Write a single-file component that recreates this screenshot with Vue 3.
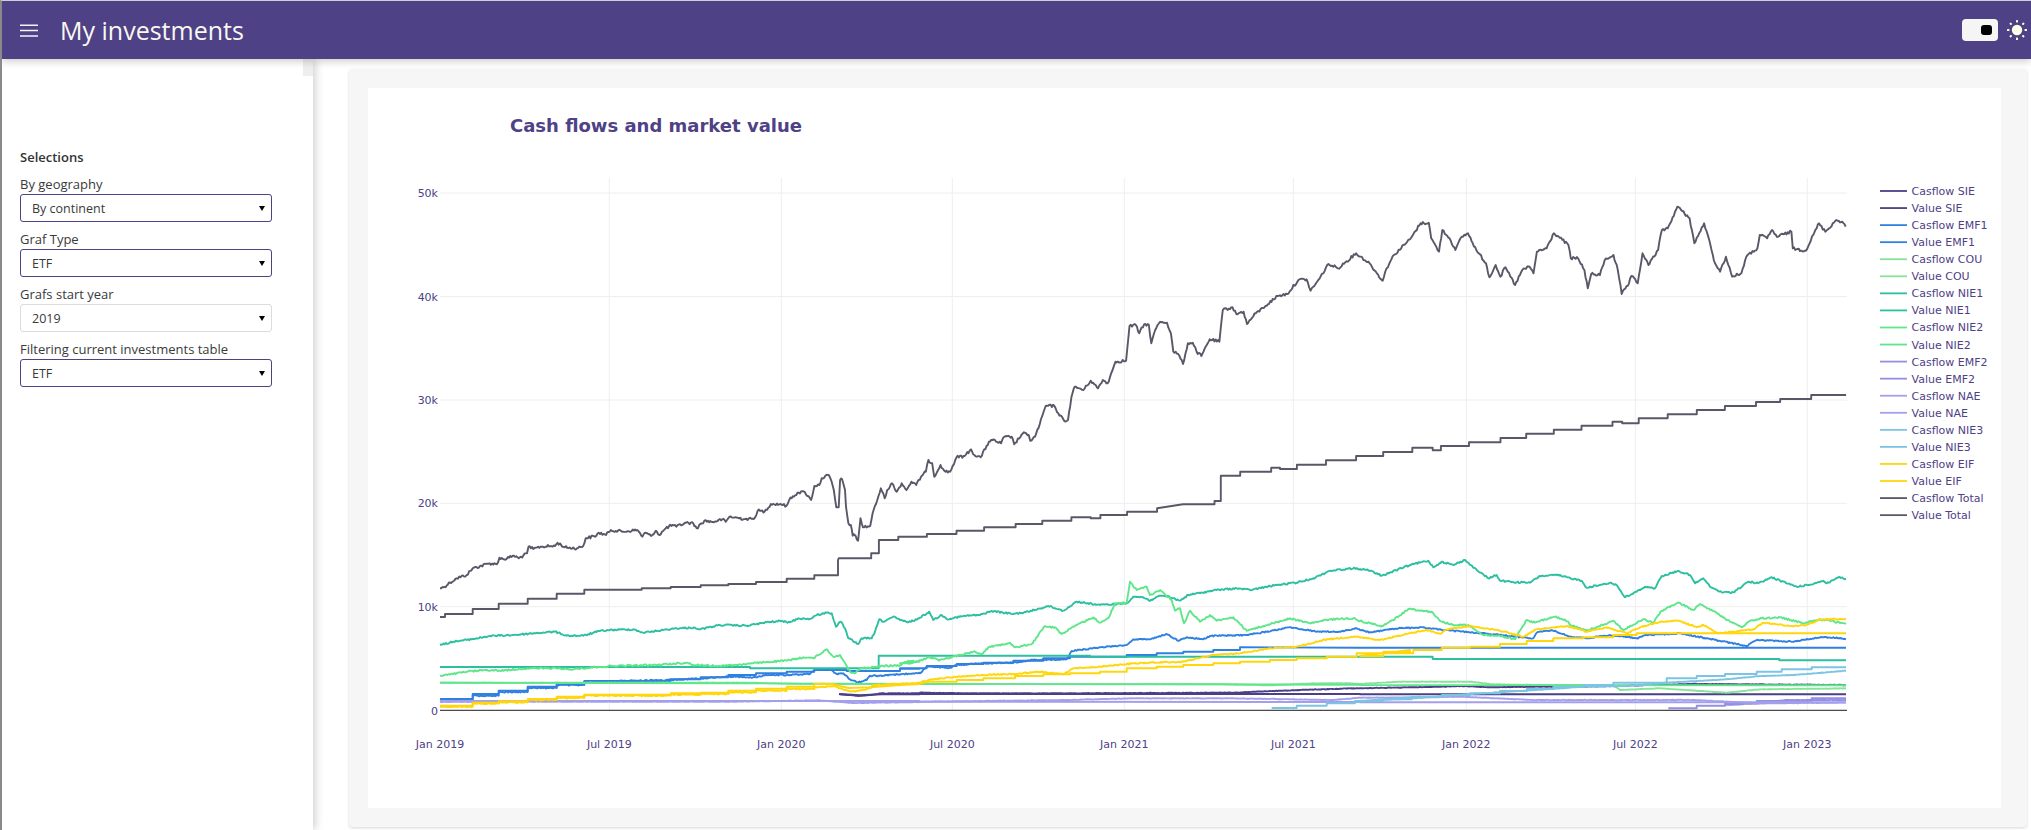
<script setup>
const C = { sie: '#4b3f87', emf1: '#2f80e0', cou: '#86e39a', nie1: '#2cbfa0', nie2: '#5fe68a', emf2: '#948fe2', nae: '#a49fec', nie3: '#7cc4e4', eif: '#ffd60a', total: '#5a5868' }

const z5 = (a) => a.map(([X, Y]) => [400 + X / 3, 560 + Y / 3])
const z6 = (a) => a.map(([X, Y]) => [900 + X / 3, 540 + Y / 3])
const z7 = (a) => a.map(([X, Y]) => [1360 + X / 3, 540 + Y / 3])
const z8 = (a) => a.map(([X, Y]) => [400 + X / 2.063, 170 + Y / 3])
const z9 = (a) => a.map(([X, Y]) => [1120 + X / 2.063, 170 + Y / 3])

// change-point list -> stair-step vertices
const step = (a) => {
  const out = [a[0]]
  for (let i = 1; i < a.length; i++) {
    out.push([a[i][0], a[i - 1][1]])
    out.push(a[i])
  }
  return out
}

let seed = 12345
const rnd = () => {
  seed = (seed * 1103515245 + 12345) & 0x7fffffff
  return seed / 0x7fffffff - 0.5
}
// adds the fine day-to-day jitter of a price series
const jag = (a, amp) => {
  const out = []
  for (let i = 0; i < a.length - 1; i++) {
    const [x0, y0] = a[i]
    const [x1, y1] = a[i + 1]
    const n = Math.max(1, Math.round((x1 - x0) / 1.2))
    for (let k = 0; k < n; k++) {
      const t = k / n
      out.push([x0 + (x1 - x0) * t, y0 + (y1 - y0) * t + (k ? rnd() * amp : 0)])
    }
  }
  out.push(a[a.length - 1])
  return out
}
const path = (a) => 'M' + a.map(([x, y]) => x.toFixed(1) + ' ' + y.toFixed(1)).join('L')

const valueTotal = jag([
  ...z5([[120, 85], [130, 82], [150, 68], [170, 55], [200, 45]]),
  ...z8([[150, 1195], [185, 1180], [200, 1183], [205, 1163], [215, 1168], [235, 1157], [245, 1165], [262, 1150], [265, 1130], [275, 1137], [290, 1130], [320, 1128], [325, 1118], [340, 1132], [365, 1135], [378, 1128], [383, 1105], [405, 1097], [410, 1088], [425, 1095], [435, 1080], [460, 1085], [490, 1080], [500, 1100], [505, 1088], [518, 1098], [528, 1082], [535, 1095], [548, 1075], [562, 1065], [570, 1070], [590, 1058], [605, 1060], [612, 1075], [628, 1052], [645, 1056], [665, 1048], [672, 1055], [680, 1040], [712, 1047], [730, 1047], [738, 1022], [752, 1025], [765, 1002], [785, 1002], [797, 1008], [803, 990], [820, 968], [835, 966], [848, 990], [855, 948], [865, 945], [870, 925], [883, 915], [888, 925], [895, 960], [900, 1012], [905, 1012], [908, 930], [912, 928], [918, 960], [920, 1010], [925, 1060], [930, 1065], [934, 1097], [938, 1095], [945, 1112], [950, 1045], [955, 1072], [970, 1068], [975, 1030], [982, 1002], [992, 955], [1000, 985], [1005, 960], [1015, 940], [1025, 965], [1035, 940], [1045, 960], [1055, 935], [1065, 945], [1075, 920], [1085, 905], [1090, 870], [1098, 880], [1102, 920], [1115, 885], [1125, 905], [1135, 905], [1148, 862], [1165, 858], [1178, 838], [1185, 855], [1198, 862], [1215, 815], [1222, 810], [1240, 820], [1245, 802], [1262, 800], [1267, 823], [1285, 790], [1297, 795], [1300, 812], [1310, 800], [1320, 762], [1332, 708], [1350, 708], [1358, 730], [1370, 752], [1378, 750], [1385, 682], [1392, 650], [1410, 660], [1425, 632], [1440, 655], [1450, 630], [1460, 640], [1470, 600], [1476, 575], [1498, 572], [1505, 468], [1518, 465], [1525, 490], [1535, 463], [1545, 465], [1550, 520], [1558, 480], [1568, 455]]),
  ...z9([[97, 458], [105, 490], [110, 545], [120, 552], [130, 582], [140, 520], [150, 518], [158, 545], [168, 558], [185, 508], [205, 515], [212, 420], [232, 412], [240, 432], [255, 425], [262, 462], [280, 430], [300, 408], [325, 378], [345, 372], [368, 330], [385, 328], [393, 362], [412, 325], [430, 282], [450, 295], [487, 250], [515, 280], [530, 310], [542, 332], [550, 295], [565, 255], [600, 205], [620, 160], [637, 158], [642, 205], [658, 245], [665, 180], [680, 205], [692, 240], [705, 200], [718, 190], [735, 240], [755, 280], [762, 322], [775, 285], [785, 320], [795, 292], [815, 345], [830, 300], [845, 290], [853, 310], [860, 245], [880, 235], [895, 190], [905, 200], [925, 225], [930, 265], [945, 265], [958, 300], [965, 355], [972, 312], [990, 315], [1000, 270], [1018, 255], [1027, 300], [1035, 372], [1050, 340], [1055, 318], [1068, 340], [1078, 250], [1090, 285], [1110, 240], [1118, 180], [1130, 175], [1150, 110], [1175, 145], [1185, 220], [1205, 160], [1218, 225], [1225, 270], [1238, 305], [1250, 260], [1263, 320], [1282, 310], [1292, 260], [1315, 235], [1320, 195], [1335, 205], [1345, 180], [1355, 200], [1385, 185], [1388, 235], [1415, 242], [1430, 195], [1442, 160], [1455, 185], [1478, 150], [1490, 155], [1497, 170]]),
], 2.8)

const cashTotal = [
  ...step(z5([[120, 171], [135, 162], [218, 147], [296, 131], [383, 116], [470, 101], [553, 89], [725, 85], [812, 81], [902, 76], [985, 72], [1068, 66], [1160, 56], [1243, 46], [1314, 0]])),
  ...step(z8([[905, 1165], [972, 1150], [988, 1110], [1028, 1100], [1087, 1092], [1148, 1082], [1205, 1072], [1270, 1062], [1325, 1052], [1385, 1042], [1425, 1045], [1445, 1035], [1500, 1025], [1562, 1015]])),
  ...step(z9([[130, 1003], [195, 993], [208, 917], [248, 905], [312, 893], [330, 897], [365, 884], [425, 871], [487, 858], [543, 846], [603, 833], [645, 841], [662, 828], [720, 817], [785, 804], [838, 791], [895, 779], [952, 767], [1016, 755], [1036, 760], [1070, 745], [1130, 733], [1190, 720], [1248, 708], [1312, 696], [1362, 687], [1426, 675], [1498, 675]])),
]

const valueNie1 = jag([
  ...z5([[120, 255], [160, 245], [200, 240], [270, 228], [340, 225], [400, 220], [465, 215], [500, 227], [550, 227], [600, 213], [630, 210], [700, 208], [730, 218], [790, 210], [830, 205], [885, 203], [900, 208], [960, 195], [1040, 197], [1100, 187], [1140, 183], [1170, 187], [1195, 175], [1230, 177], [1250, 165], [1280, 158], [1295, 160], [1308, 200], [1322, 185], [1335, 205], [1345, 235], [1375, 252], [1385, 235], [1415, 235], [1425, 215], [1438, 178], [1450, 185], [1480, 170], [1500, 180], [1525, 187], [1558, 175]]),
  ...z6([[60, 233], [88, 215], [100, 240], [125, 225], [140, 237], [200, 227], [240, 225], [275, 213], [340, 222], [385, 215], [445, 198], [490, 212], [530, 185], [600, 195], [680, 190], [700, 170], [730, 172], [750, 182], [770, 170], [800, 168], [840, 182], [865, 165], [950, 150], [1010, 145], [1050, 150], [1130, 135], [1190, 128], [1240, 115], [1290, 92], [1360, 85]]),
  ...z7([[0, 87], [30, 92], [65, 107], [150, 75], [205, 62], [220, 82], [245, 65], [280, 75], [315, 60], [350, 90], [385, 115], [410, 105], [420, 122], [470, 127], [510, 128], [540, 108], [590, 105], [665, 122], [680, 143], [720, 135], [750, 128], [770, 135], [795, 172], [830, 155], [855, 140], [885, 145], [905, 108], [955, 93], [990, 105], [1005, 130], [1030, 115], [1050, 140], [1085, 157], [1120, 157], [1165, 125], [1195, 130], [1235, 112], [1260, 122], [1310, 140], [1345, 135], [1390, 122], [1400, 130], [1435, 112], [1458, 117]]),
], 1.6)

const valueNie2 = jag([
  ...z5([[120, 348], [160, 342], [200, 335], [260, 330], [300, 332], [380, 325], [470, 325], [510, 328], [580, 322], [640, 318], [720, 316], [770, 315], [860, 308], [880, 315], [960, 318], [1040, 312], [1100, 306], [1160, 302], [1210, 292], [1240, 295], [1280, 268], [1300, 290], [1320, 285], [1350, 335], [1365, 340], [1380, 325], [1420, 322], [1450, 318], [1500, 316], [1525, 302], [1558, 305]]),
  ...z6([[0, 370], [30, 370], [90, 352], [120, 360], [180, 345], [220, 335], [245, 342], [265, 322], [330, 308], [345, 322], [395, 312], [415, 285], [432, 260], [465, 262], [485, 282], [530, 255], [580, 232], [600, 248], [625, 235], [645, 190], [680, 188], [690, 125], [710, 150], [740, 140], [750, 165], [780, 150], [815, 180], [825, 212], [840, 205], [852, 250], [870, 212], [900, 245], [930, 225], [950, 242], [1000, 232], [1040, 272], [1090, 258], [1170, 235], [1230, 250], [1290, 238], [1360, 235]]),
  ...z7([[0, 243], [65, 258], [100, 240], [145, 207], [215, 215], [240, 243], [280, 255], [325, 255], [370, 285], [420, 288], [465, 298], [500, 240], [525, 248], [585, 230], [625, 245], [630, 255], [680, 272], [760, 242], [790, 270], [850, 238], [880, 248], [905, 212], [955, 188], [1000, 210], [1020, 192], [1065, 215], [1110, 245], [1145, 262], [1165, 245], [1205, 235], [1260, 232], [1330, 250], [1375, 240], [1400, 240], [1458, 252]]),
], 1.6)

const valueEmf1 = jag([
  ...step(z5([[120, 422], [218, 407], [296, 396], [383, 384], [470, 375], [553, 366]])),
  ...z5([[700, 362], [812, 360], [902, 355], [985, 350], [1068, 352], [1100, 345], [1160, 345], [1230, 342], [1245, 328], [1290, 328], [1310, 342], [1330, 340], [1350, 358], [1375, 367], [1400, 360], [1410, 347], [1450, 347], [1500, 343], [1558, 338]]),
  ...z6([[60, 400], [80, 380], [150, 383], [170, 375], [250, 370], [340, 368], [400, 360], [500, 358], [515, 333], [600, 322], [680, 315], [700, 298], [750, 298], [800, 282], [835, 302], [860, 292], [910, 298], [930, 288], [1040, 285], [1100, 275], [1170, 262], [1250, 275], [1320, 275], [1370, 265]]),
  ...z7([[0, 270], [30, 277], [115, 265], [190, 262], [245, 270], [350, 278], [420, 285], [520, 295], [530, 278], [575, 270], [630, 290], [680, 295], [750, 285], [830, 295], [860, 285], [960, 280], [1040, 295], [1160, 318], [1190, 300], [1300, 305], [1380, 292], [1420, 292], [1458, 298]]),
], 1.2)

const cashEmf1 = [
  ...step(z5([[120, 417], [218, 402], [296, 392], [383, 380], [470, 373], [553, 363], [812, 358], [902, 352], [985, 345], [1068, 340], [1160, 335], [1243, 330], [1340, 333], [1500, 326], [1558, 325]])),
  ...step(z6([[0, 385], [80, 378], [170, 372], [250, 368], [340, 362], [430, 355], [510, 350], [680, 345], [770, 340], [850, 335], [940, 330], [1020, 322]])),
  ...z7([[0, 323], [1458, 323]]),
]

const valueEif = jag([
  ...step(z5([[120, 440], [218, 431], [296, 427], [383, 420], [470, 414], [553, 407], [812, 404], [902, 402], [985, 397], [1068, 392], [1160, 387], [1243, 382]])),
  ...z5([[1300, 378], [1320, 385], [1345, 392], [1365, 395], [1410, 385], [1420, 375], [1490, 372], [1558, 368]]),
  ...z6([[85, 420], [170, 410], [250, 405], [345, 402], [420, 395], [490, 403], [520, 385], [600, 380], [680, 372], [750, 368], [850, 365], [940, 345], [1020, 340], [1110, 325], [1190, 320], [1280, 298], [1370, 290]]),
  ...z7([[0, 292], [60, 300], [150, 280], [200, 270], [240, 282], [260, 268], [330, 258], [420, 272], [490, 290], [530, 268], [620, 258], [680, 275], [740, 262], [800, 280], [840, 262], [900, 245], [955, 242], [1010, 262], [1030, 255], [1075, 280], [1120, 275], [1180, 268], [1210, 248], [1295, 258], [1340, 255], [1380, 238], [1458, 238]]),
], 1.2)

const cashEif = [
  ...step(z5([[120, 437], [218, 428], [296, 424], [383, 417], [470, 410], [553, 404], [812, 400], [902, 398], [985, 392], [1068, 386], [1160, 380], [1243, 372], [1298, 372]])),
  ...z5([[1298, 372], [1320, 378], [1345, 384], [1410, 382], [1500, 375], [1558, 372]]),
  ...step(z6([[85, 425], [170, 420], [250, 415], [345, 408], [430, 403], [510, 400], [600, 395], [680, 385], [770, 380], [850, 375], [940, 370], [1020, 365], [1110, 360], [1190, 355], [1280, 350], [1370, 340], [1450, 335], [1530, 330]])),
  ...step(z7([[0, 348], [70, 340], [160, 330], [245, 323], [330, 320], [420, 312], [500, 303], [580, 295], [670, 292], [760, 285], [830, 280], [1458, 280]])),
]

const flatCou = jag([
  ...z5([[120, 368], [1040, 368], [1200, 372], [1558, 372]]),
  ...z6([[60, 432], [960, 432], [1110, 436], [1240, 430], [1350, 430]]),
  ...z7([[0, 432], [120, 425], [200, 425], [330, 425], [400, 433], [530, 435], [760, 435], [780, 450], [900, 445], [1100, 458], [1200, 448], [1458, 445]]),
], 0.3)
const flatNie2 = [
  ...z5([[120, 368], [1040, 370], [1558, 372]]),
  ...z6([[60, 432], [1380, 434]]),
  ...z7([[0, 435], [1458, 436]]),
]
const cashNie1 = step([
  ...z5([[120, 321], [1040, 321], [1050, 325], [1436, 287]]),
  ...z6([[570, 350]]),
  ...z7([[218, 357], [1258, 361], [1458, 361]]),
])

const valueSie = jag([
  ...z5([[1317, 402], [1345, 405], [1375, 408], [1410, 405], [1445, 400], [1558, 400]]),
  ...z6([[60, 458], [200, 460], [500, 460], [1000, 458], [1200, 450], [1360, 445]]),
  ...z7([[0, 445], [150, 442], [310, 438], [400, 442], [520, 440], [650, 440], [760, 438], [1000, 432], [1458, 435]]),
], 0.5)
const cashSie = [
  ...z5([[1317, 402], [1380, 406], [1445, 403], [1558, 403]]),
  ...z6([[60, 462], [1380, 462]]),
  ...z7([[0, 463], [1458, 463]]),
]

const valueNae = jag([
  ...z5([[120, 426], [300, 425], [1000, 425], [1260, 421], [1360, 429], [1558, 426]]),
  ...z6([[60, 485], [500, 480], [700, 475], [1000, 475], [1300, 480]]),
  ...z7([[0, 473], [200, 472], [300, 470], [520, 480], [1000, 480], [1200, 490], [1458, 488]]),
], 0.4)
const cashNae = [
  ...z5([[120, 423], [1558, 423]]),
  ...z6([[60, 485], [1380, 486]]),
  ...z7([[0, 487], [1458, 487]]),
]
const cashEmf2 = step(z7([[925, 505], [1010, 497], [1095, 490], [1190, 483], [1355, 475], [1458, 475]]))
const valueEmf2 = jag(z7([[1095, 495], [1200, 490], [1280, 480], [1458, 480]]), 0.4)
const cashNie3 = [
  ...step(z6([[1115, 504], [1190, 497], [1280, 490], [1365, 483]])),
  ...step(z7([[30, 483], [70, 478], [155, 471], [245, 465], [330, 460], [420, 453], [500, 447], [580, 441], [670, 435], [760, 428], [920, 415], [1010, 408], [1095, 402], [1190, 395], [1265, 388], [1355, 382], [1458, 382]])),
]
const valueNie3 = jag([
  ...z6([[1370, 485], [1450, 480], [1530, 472], [1560, 470]]),
  ...z7([[0, 483], [160, 475], [330, 462], [500, 452], [670, 440], [800, 438], [920, 428], [1100, 418], [1200, 408], [1300, 405], [1400, 397], [1458, 392]]),
], 0.4)

const traces = [
  { c: C.sie, d: path(cashSie) },
  { c: C.sie, d: path(valueSie) },
  { c: C.emf1, d: path(cashEmf1) },
  { c: C.emf1, d: path(valueEmf1) },
  { c: C.cou, d: path(flatCou) },
  { c: C.nie1, d: path(cashNie1) },
  { c: C.nie1, d: path(valueNie1) },
  { c: C.nie2, d: path(flatNie2) },
  { c: C.nie2, d: path(valueNie2) },
  { c: C.emf2, d: path(cashEmf2) },
  { c: C.emf2, d: path(valueEmf2) },
  { c: C.nae, d: path(cashNae) },
  { c: C.nae, d: path(valueNae) },
  { c: C.nie3, d: path(cashNie3) },
  { c: C.nie3, d: path(valueNie3) },
  { c: C.eif, d: path(cashEif) },
  { c: C.eif, d: path(valueEif) },
  { c: C.total, d: path(cashTotal) },
  { c: C.total, d: path(valueTotal) },
]

const yTicks = [
  { y: 193, t: '50k' },
  { y: 296.5, t: '40k' },
  { y: 400, t: '30k' },
  { y: 503.3, t: '20k' },
  { y: 606.7, t: '10k' },
]
const xTicks = [
  { x: 440, t: 'Jan 2019' },
  { x: 609.3, t: 'Jul 2019' },
  { x: 781.3, t: 'Jan 2020' },
  { x: 952.3, t: 'Jul 2020' },
  { x: 1124.3, t: 'Jan 2021' },
  { x: 1293.3, t: 'Jul 2021' },
  { x: 1466.3, t: 'Jan 2022' },
  { x: 1635.3, t: 'Jul 2022' },
  { x: 1807.3, t: 'Jan 2023' },
]
const xGrid = xTicks.slice(1)
const legendNames = [
  ['Casflow SIE', C.sie], ['Value SIE', C.sie], ['Casflow EMF1', C.emf1], ['Value EMF1', C.emf1],
  ['Casflow COU', C.cou], ['Value COU', C.cou], ['Casflow NIE1', C.nie1], ['Value NIE1', C.nie1],
  ['Casflow NIE2', C.nie2], ['Value NIE2', C.nie2], ['Casflow EMF2', C.emf2], ['Value EMF2', C.emf2],
  ['Casflow NAE', C.nae], ['Value NAE', C.nae], ['Casflow NIE3', C.nie3], ['Value NIE3', C.nie3],
  ['Casflow EIF', C.eif], ['Value EIF', C.eif], ['Casflow Total', C.total], ['Value Total', C.total],
]
const legend = legendNames.map(([t, c], i) => ({ t, c, y: 191 + i * 17.06 }))

const selects = [
  { label: 'By geography', value: 'By continent', accent: true },
  { label: 'Graf Type', value: 'ETF', accent: true },
  { label: 'Grafs start year', value: '2019', accent: false },
  { label: 'Filtering current investments table', value: 'ETF', accent: true },
]
const rays = [0, 45, 90, 135, 180, 225, 270, 315]
</script>

<template>
  <div class="app">
    <header class="topbar">
      <svg class="burger" width="18" height="14" viewBox="0 0 18 14">
        <path d="M0 1.2H18M0 6.6H18M0 12H18" stroke="#f4f4f4" stroke-width="1.5" fill="none" />
      </svg>
      <h1 class="title">My investments</h1>
      <div class="spacer"></div>
      <div class="switch"><span class="knob"></span></div>
      <svg class="sun" width="22" height="22" viewBox="-11 -11 22 22">
        <circle r="5.2" fill="#fbffe6" />
        <rect v-for="a in rays" :key="a" x="-1" y="-10" width="2" height="2.4" rx="0.6" fill="#fbffe6" :transform="`rotate(${a})`" />
      </svg>
    </header>
    <div class="body">
      <aside class="sidebar">
        <span class="scroll-chip"></span>
        <div class="heading">Selections</div>
        <div v-for="s in selects" :key="s.label" class="field">
          <label class="field-label">{{ s.label }}</label>
          <div class="select-wrap">
            <select class="select" :class="{ accent: s.accent }">
              <option>{{ s.value }}</option>
            </select>
          </div>
        </div>
      </aside>
      <main class="content">
        <section class="card">
          <div class="panel">
            <svg class="chart" width="1633" height="720" viewBox="368 88 1633 720">
              <text x="510" y="132" class="chart-title">Cash flows and market value</text>
              <g>
                <line v-for="t in xGrid" :key="t.t" :x1="t.x" :x2="t.x" y1="178" y2="710" class="grid" />
                <line v-for="t in yTicks" :key="t.t" x1="440" x2="1847" :y1="t.y" :y2="t.y" class="grid" />
              </g>
              <path v-for="(tr, i) in traces" :key="i" :d="tr.d" :stroke="tr.c" class="trace" />
              <line x1="440" x2="1847" y1="710.3" y2="710.3" class="zero" />
              <text v-for="t in yTicks" :key="t.t" x="438" :y="t.y + 4" class="tick end">{{ t.t }}</text>
              <text x="438" y="714.5" class="tick end">0</text>
              <text v-for="t in xTicks" :key="t.t" :x="t.x" y="748" class="tick mid">{{ t.t }}</text>
              <g v-for="l in legend" :key="l.t">
                <line x1="1880" x2="1907" :y1="l.y" :y2="l.y" :stroke="l.c" class="legend-line" />
                <text x="1911.5" :y="l.y + 4" class="tick">{{ l.t }}</text>
              </g>
            </svg>
          </div>
        </section>
      </main>
    </div>
  </div>
</template>

<style>
html, body { margin: 0; padding: 0; background: #fff; }
</style>

<style scoped>
.app {
  width: 2031px;
  height: 830px;
  box-sizing: border-box;
  border-top: 1px solid #cfcfcf;
  border-left: 2px solid #8a8a8a;
  display: flex;
  flex-direction: column;
  overflow: hidden;
  font-family: "Open Sans", sans-serif;
  background: #fff;
}
.topbar {
  height: 58px;
  flex: none;
  background: #4f4186;
  display: flex;
  align-items: center;
  padding: 0 3px 0 18px;
  box-shadow: 0 2px 8px rgba(0, 0, 0, 0.22);
  position: relative;
  z-index: 2;
}
.burger { flex: none; margin-top: 1px; }
.title {
  margin: 0 0 0 22px;
  font-size: 25px;
  font-weight: 400;
  color: #f8f8f0;
  line-height: 34px;
}
.spacer { flex: 1; }
.switch {
  width: 36px;
  height: 22px;
  border-radius: 4px;
  background: #f5f5f5;
  display: flex;
  align-items: center;
  justify-content: flex-end;
  padding-right: 6px;
  box-sizing: border-box;
}
.knob { width: 11px; height: 10px; border-radius: 3px; background: #000; }
.sun { margin-left: 8px; flex: none; }
.body { flex: 1; display: flex; min-height: 0; }
.sidebar {
  width: 311px;
  flex: none;
  box-sizing: border-box;
  padding: 89px 0 0 18px;
  background: #fff;
  box-shadow: 2px 0 9px rgba(0, 0, 0, 0.2);
  position: relative;
  z-index: 1;
}
.scroll-chip {
  position: absolute;
  top: 0;
  right: 0;
  width: 10px;
  height: 17px;
  background: #eeeeee;
}
.heading {
  font-size: 13px;
  font-weight: 600;
  line-height: 18px;
  color: #333;
  margin-bottom: 9px;
}
.field { margin-bottom: 9px; }
.field-label {
  display: block;
  font-size: 13px;
  line-height: 18px;
  color: #3a3a3a;
  margin-bottom: 1px;
}
.select-wrap { position: relative; width: 252px; height: 27px; }
.select-wrap::after {
  content: "";
  position: absolute;
  right: 7px;
  top: 12px;
  border-left: 3px solid transparent;
  border-right: 3px solid transparent;
  border-top: 5px solid #000;
  pointer-events: none;
}
.select {
  appearance: none;
  -webkit-appearance: none;
  width: 252px;
  height: 28px;
  box-sizing: border-box;
  border: 1px solid #dcdcdc;
  border-radius: 3px;
  background: #fff;
  padding: 0 0 0 11px;
  font-family: "Open Sans", sans-serif;
  font-size: 12.5px;
  color: #3a3a3a;
  outline: none;
}
.select.accent { border-color: #4f4186; }
.content {
  flex: 1;
  min-width: 0;
  box-sizing: border-box;
  padding: 10px 4px 3px 36px;
  display: flex;
}
.card {
  flex: 1;
  box-sizing: border-box;
  padding: 19px 26px 19px 19px;
  background: #f6f6f6;
  border-radius: 4px;
  box-shadow: 0 1px 3px rgba(0, 0, 0, 0.16);
  display: flex;
}
.panel { flex: 1; background: #fff; overflow: hidden; }
.chart { display: block; }
.chart-title {
  font-family: "DejaVu Sans", sans-serif;
  font-size: 18px;
  font-weight: 700;
  fill: #4f4186;
}
.grid { stroke: #eeeeee; stroke-width: 1; }
.zero { stroke: #4a4a4a; stroke-width: 1.2; }
.trace { fill: none; stroke-width: 1.9; stroke-linejoin: round; }
.legend-line { stroke-width: 1.8; }
.tick {
  font-family: "DejaVu Sans", sans-serif;
  font-size: 11px;
  fill: #4f4186;
}
.end { text-anchor: end; }
.mid { text-anchor: middle; }
</style>
